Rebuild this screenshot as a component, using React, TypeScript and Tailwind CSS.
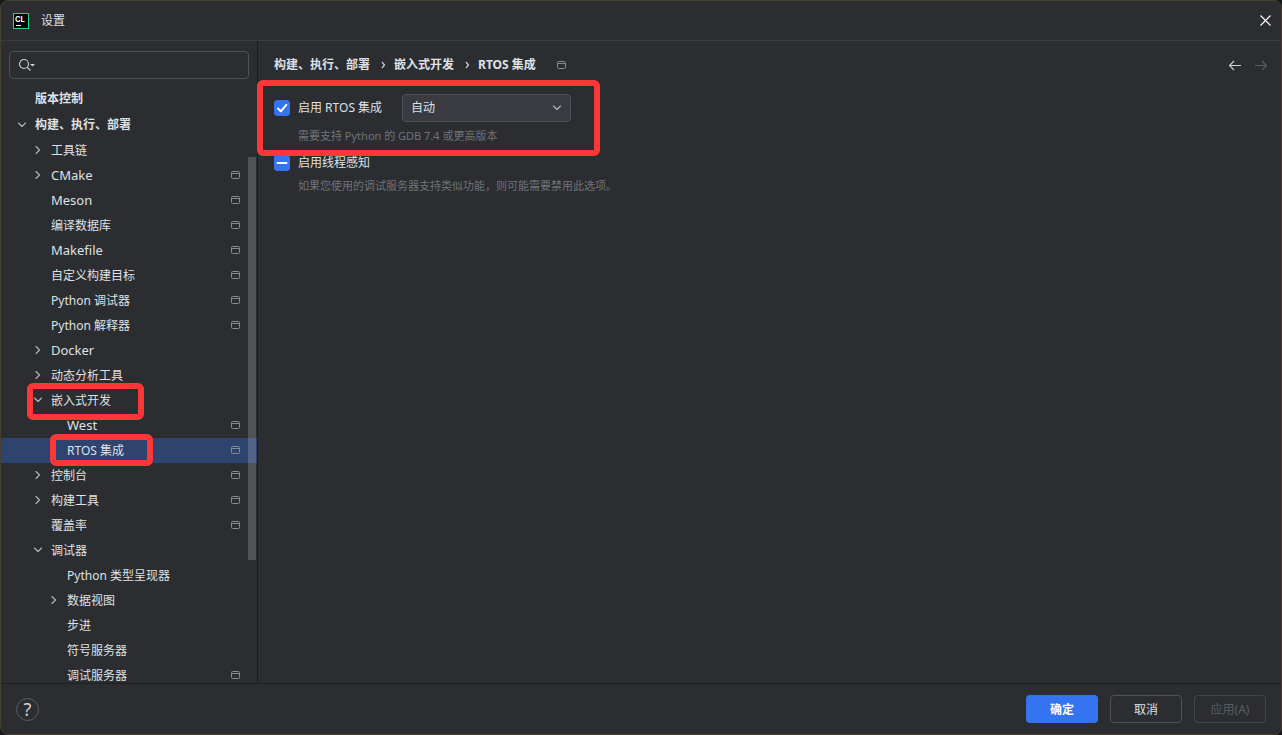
import {useEffect, useRef, useState} from 'react';
import clsx from 'clsx';

type TreeItem = {
  title: string;
  depth: 0 | 1 | 2;
  state?: 'open' | 'closed';
  project?: boolean;
  latin?: boolean;
  mark?: string;
};

const items: TreeItem[] = [
  {title: '版本控制', depth: 0},
  {title: '构建、执行、部署', depth: 0, state: 'open'},
  {title: '工具链', depth: 1, state: 'closed'},
  {title: 'CMake', depth: 1, state: 'closed', project: true, latin: true},
  {title: 'Meson', depth: 1, project: true, latin: true},
  {title: '编译数据库', depth: 1, project: true},
  {title: 'Makefile', depth: 1, project: true, latin: true},
  {title: '自定义构建目标', depth: 1, project: true},
  {title: 'Python 调试器', depth: 1, project: true},
  {title: 'Python 解释器', depth: 1, project: true},
  {title: 'Docker', depth: 1, state: 'closed', latin: true},
  {title: '动态分析工具', depth: 1, state: 'closed'},
  {
    title: '嵌入式开发',
    depth: 1,
    state: 'open',
    mark: '-top-[5px] left-[26px] h-[37px] w-[117px]',
  },
  {title: 'West', depth: 2, project: true, latin: true},
  {
    title: 'RTOS 集成',
    depth: 2,
    project: true,
    mark: '-top-1 left-[49px] h-8 w-[103px]',
  },
  {title: '控制台', depth: 1, state: 'closed', project: true},
  {title: '构建工具', depth: 1, state: 'closed', project: true},
  {title: '覆盖率', depth: 1, project: true},
  {title: '调试器', depth: 1, state: 'open'},
  {title: 'Python 类型呈现器', depth: 2},
  {title: '数据视图', depth: 2, state: 'closed'},
  {title: '步进', depth: 2},
  {title: '符号服务器', depth: 2},
  {title: '调试服务器', depth: 2, project: true},
];

const indent = {0: 'pl-[13px]', 1: 'pl-[29px]', 2: 'pl-[45px]'};

function Chevron({open}: {open: boolean}) {
  return (
    <svg
      className="h-4 w-4 shrink-0"
      viewBox="0 0 16 16"
      fill="none"
      stroke="#B4B8BF"
      strokeWidth="1.1"
      strokeLinecap="round"
      strokeLinejoin="round">
      <path d={open ? 'M4.5 6L8 9.5L11.5 6' : 'M6 4.5L9.5 8L6 11.5'} />
    </svg>
  );
}

function ProjectIcon() {
  return (
    <svg
      className="h-2 w-[9px] shrink-0"
      viewBox="0 0 9 8"
      fill="none"
      stroke="#868A91">
      <rect x="0.5" y="0.5" width="8" height="7" rx="1" />
      <path d="M1 2.5H8" />
    </svg>
  );
}

function Mark({className}: {className: string}) {
  return (
    <span
      className={clsx(
        'pointer-events-none absolute z-10 rounded-md border-6 border-[#FD3737]',
        className,
      )}
    />
  );
}

function TreeRow({
  item,
  selected,
  onSelect,
}: {
  item: TreeItem;
  selected: boolean;
  onSelect: () => void;
}) {
  return (
    <li className="relative">
      <button
        className={clsx(
          'flex w-full items-center gap-[5px] pr-[17px] text-left',
          indent[item.depth],
          item.depth === 0 ? 'h-[26px] font-bold' : 'h-[25px]',
          item.latin ? 'text-[13px] leading-[18px]' : 'leading-[19px]',
          selected && 'bg-[#2E436E]',
        )}
        onClick={onSelect}>
        {item.state ? (
          <Chevron open={item.state === 'open'} />
        ) : (
          <span className="w-4 shrink-0" />
        )}
        <span className="grow whitespace-nowrap">{item.title}</span>
        {item.project && <ProjectIcon />}
      </button>
      {item.mark && <Mark className={item.mark} />}
    </li>
  );
}

function Checkbox({id, partial}: {id: string; partial?: boolean}) {
  const ref = useRef<HTMLInputElement>(null);
  const [checked, setChecked] = useState(!partial);
  const [mixed, setMixed] = useState(!!partial);
  useEffect(() => {
    if (ref.current) ref.current.indeterminate = mixed;
  }, [mixed]);
  return (
    <span className="relative flex h-4 w-4 shrink-0">
      <input
        ref={ref}
        id={id}
        type="checkbox"
        checked={checked}
        onChange={(e) => {
          setMixed(false);
          setChecked(e.target.checked);
        }}
        className="h-4 w-4 appearance-none rounded-[3px] border border-[#6F737A] checked:border-[#3574F0] checked:bg-[#3574F0] indeterminate:border-[#3574F0] indeterminate:bg-[#3574F0]"
      />
      {(checked || mixed) && (
        <svg
          className="pointer-events-none absolute inset-0 h-4 w-4"
          viewBox="0 0 16 16"
          fill="none"
          stroke="white"
          strokeWidth="2"
          strokeLinecap="round"
          strokeLinejoin="round">
          <path d={mixed ? 'M3.5 8H12.5' : 'M4 8.5L6.8 11.3L12.3 4.8'} />
        </svg>
      )}
    </span>
  );
}

function Sidebar() {
  const [selected, setSelected] = useState('RTOS 集成');
  return (
    <aside className="flex w-[257px] shrink-0 flex-col border-r border-[#1E1F22] pt-[10px]">
      <label className="mx-2 flex h-7 items-center rounded border border-[#4E5157] px-2">
        <svg
          className="h-4 w-[18px] shrink-0"
          viewBox="0 0 18 16"
          fill="none"
          stroke="#CED0D6">
          <circle cx="6" cy="7" r="4.5" strokeWidth="1.1" />
          <path d="M9.3 10.3L12.5 13.5" strokeWidth="1.1" />
          <path d="M12 7H17L14.5 9.5Z" fill="#CED0D6" stroke="none" />
        </svg>
        <input
          type="text"
          aria-label="搜索"
          className="min-w-0 grow bg-transparent outline-none"
        />
      </label>
      <div className="relative mt-[7px] min-h-0 grow overflow-hidden">
        <ul>
          {items.map((item) => (
            <TreeRow
              key={item.title}
              item={item}
              selected={item.title === selected}
              onSelect={() => setSelected(item.title)}
            />
          ))}
        </ul>
        <div className="absolute top-[71px] right-px h-[403px] w-2 bg-white/18" />
      </div>
    </aside>
  );
}

function Separator() {
  return (
    <svg
      className="h-3 w-6"
      viewBox="0 0 24 12"
      fill="none"
      stroke="#CED0D6"
      strokeWidth="1.2">
      <path d="M12 3L14.5 6L12 9" />
    </svg>
  );
}

function Settings() {
  return (
    <main className="min-w-0 grow">
      <div className="flex h-12 items-center justify-between pr-[13px] pl-4">
        <nav className="flex items-center font-bold">
          <a href="#build">构建、执行、部署</a>
          <Separator />
          <a href="#embedded">嵌入式开发</a>
          <Separator />
          <a href="#rtos" className="mr-[21px]">
            RTOS 集成
          </a>
          <ProjectIcon />
        </nav>
        <div className="flex gap-3">
          <button aria-label="后退">
            <svg
              className="h-3 w-[14px]"
              viewBox="0 0 14 12"
              fill="none"
              stroke="#CED0D6"
              strokeWidth="1.1">
              <path d="M13 6.5H1.5M6 2L1.5 6.5L6 11" />
            </svg>
          </button>
          <button aria-label="前进" disabled>
            <svg
              className="h-3 w-[14px]"
              viewBox="0 0 14 12"
              fill="none"
              stroke="#5A5D63"
              strokeWidth="1.1">
              <path d="M1 6.5H12.5M8 2L12.5 6.5L8 11" />
            </svg>
          </button>
        </div>
      </div>
      <section className="relative px-4 pt-[5px]">
        <div className="flex items-center leading-5">
          <Checkbox id="rtos" />
          <label htmlFor="rtos" className="pr-5 pl-2">
            启用 RTOS 集成
          </label>
          <div className="relative">
            <select
              aria-label="RTOS"
              className="block h-7 w-[169px] appearance-none rounded border border-[#4E5157] bg-[#393B40] pr-6 pl-2">
              <option>自动</option>
              <option>FreeRTOS</option>
              <option>Zephyr</option>
            </select>
            <span className="pointer-events-none absolute top-[6px] right-[6px]">
              <Chevron open />
            </span>
          </div>
        </div>
        <p className="mt-[5px] pl-6 text-[11px] leading-[18px] text-[#6F737A]">
          需要支持 Python 的 GDB 7.4 或更高版本
        </p>
        <Mark className="-top-[9px] -left-px h-[76px] w-[343px]" />
      </section>
      <section className="px-4 pt-2">
        <div className="flex items-center leading-5">
          <Checkbox id="threads" partial />
          <label htmlFor="threads" className="pl-2">
            启用线程感知
          </label>
        </div>
        <p className="mt-1 pl-6 text-[11px] leading-[18px] text-[#6F737A]">
          如果您使用的调试服务器支持类似功能，则可能需要禁用此选项。
        </p>
      </section>
    </main>
  );
}

export default function App() {
  return (
    <div className="h-screen bg-[#17181A] text-xs leading-[18px] text-[#DFE1E5] [font-family:'Noto_Sans','Noto_Sans_CJK_SC',sans-serif]">
      <div className="flex h-full flex-col overflow-hidden rounded-lg border border-[#453F30] bg-[#2B2D30]">
        <header className="flex h-10 shrink-0 items-center border-b border-[#393B40] pr-[10px] pl-3">
          <svg className="h-4 w-4" viewBox="0 0 16 16">
            <rect
              x="0.5"
              y="0.5"
              width="15"
              height="15"
              fill="black"
              stroke="#21D789"
            />
            <text
              x="2"
              y="8.5"
              fill="white"
              fontSize="7.5"
              fontWeight="bold"
              fontFamily="Inter, sans-serif">
              CL
            </text>
            <rect x="3" y="12" width="5" height="1" fill="white" />
          </svg>
          <h1 className="grow pl-3">设置</h1>
          <button aria-label="关闭">
            <svg
              className="h-[11px] w-[11px]"
              viewBox="0 0 11 11"
              stroke="white"
              strokeWidth="1.1">
              <path d="M0.5 0.5L10.5 10.5M10.5 0.5L0.5 10.5" />
            </svg>
          </button>
        </header>
        <div className="flex min-h-0 grow">
          <Sidebar />
          <Settings />
        </div>
        <footer className="flex h-[51px] shrink-0 items-center gap-3 border-t border-[#1E1F22] px-[15px] leading-[19px]">
          <button
            aria-label="帮助"
            className="mr-auto flex h-[23px] w-[23px] items-center justify-center rounded-full border border-[#5A5D63] text-lg leading-[19px] text-[#CED0D6]">
            ?
          </button>
          <button className="h-7 w-18 rounded bg-[#3574F0] font-bold text-white">
            确定
          </button>
          <button className="h-7 w-18 rounded border border-[#4E5157]">
            取消
          </button>
          <button
            disabled
            className="h-7 w-18 rounded border border-[#43454A] text-[#5A5D63]">
            应用(A)
          </button>
        </footer>
      </div>
    </div>
  );
}
